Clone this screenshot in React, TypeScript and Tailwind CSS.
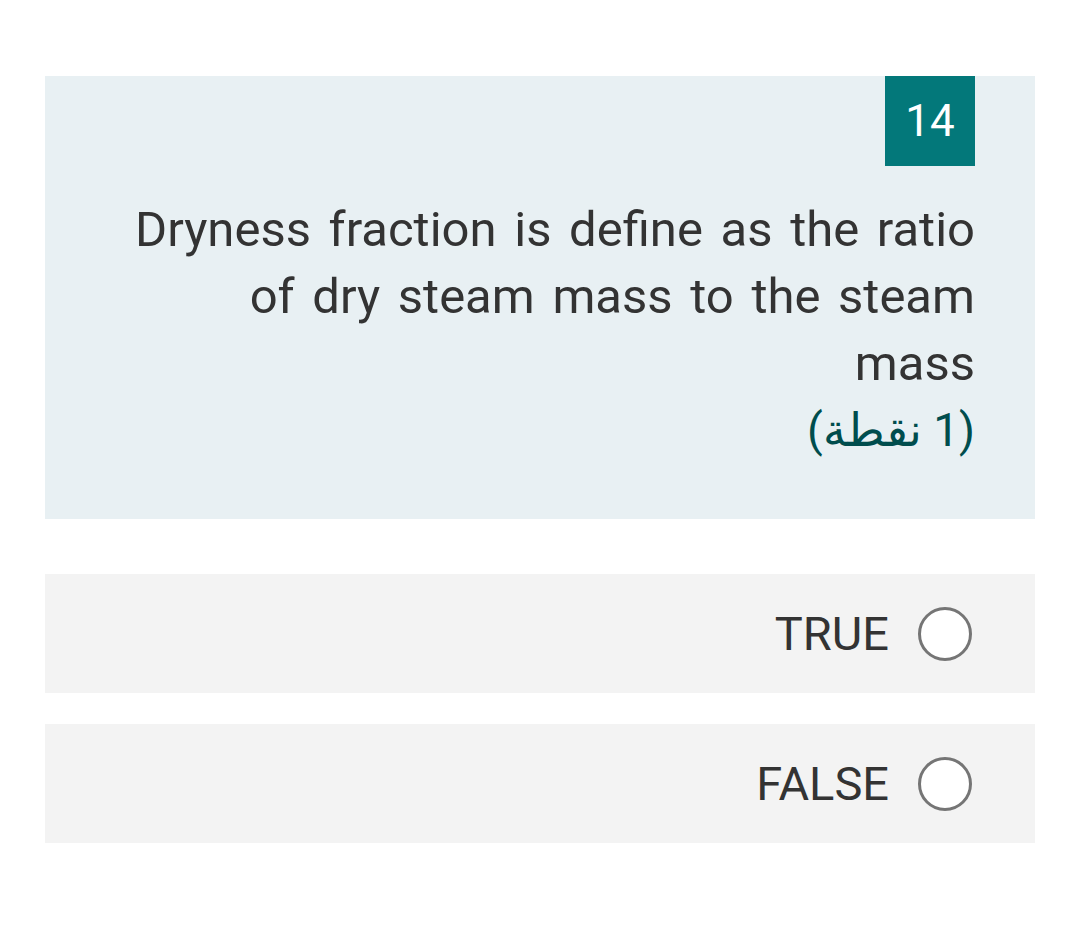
import React from "react";

function Option({ label }: { label: string }) {
  return (
    <div className="flex h-[119px] items-center justify-end bg-[#f3f3f3] pr-[63px]">
      <span className="text-[47px] leading-none text-[#333333]">{label}</span>
      <span className="ml-[29px] box-border h-[54px] w-[54px] rounded-full border-[3px] border-[#757575] bg-white" />
    </div>
  );
}

export default function App() {
  return (
    <div
      className="min-h-[928px] w-[1080px] bg-white px-[45px] pt-[76px]"
      style={{ fontFamily: "Roboto, 'Noto Sans', sans-serif" }}
    >
      <div className="flex flex-col items-end bg-[#e8f0f3] pb-[55px] pr-[60px]">
        <div className="flex h-[90px] w-[90px] items-center justify-center bg-[#03787a] text-[44px] text-white">
          14
        </div>
        <div className="mt-[30px] w-[845px] text-right text-[49px] leading-[67px] text-[#333333] [word-spacing:5.5px]">
          Dryness fraction is define as the ratio of dry steam mass to the steam mass
        </div>
        <div dir="rtl" className="text-[46px] leading-[67px] text-[#004d4d]">
          (1 نقطة)
        </div>
      </div>
      <div className="mt-[55px] flex flex-col gap-[31px]">
        <Option label="TRUE" />
        <Option label="FALSE" />
      </div>
    </div>
  );
}
